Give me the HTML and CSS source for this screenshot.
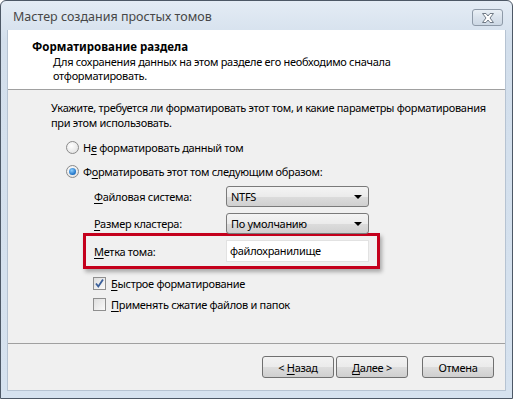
FILE: index.html
```html
<!DOCTYPE html>
<html lang="ru">
<head>
    <meta charset="UTF-8">
    <title>Мастер создания простых томов</title>
    <link rel="stylesheet" href="styles.css">
</head>
<body>
    <div class="window">
        <div class="titlebar">
            <span class="title">Мастер создания простых томов</span>
            <button class="close-btn" aria-label="Закрыть">
                <svg width="16" height="10" viewBox="0 0 16 10">
                    <path d="M2.5 0.5 H6 L8 3 L10 0.5 H13.5 L10 5 L13.5 9.5 H10 L8 7 L6 9.5 H2.5 L6 5 Z" fill="#fff" stroke="#707a86" stroke-width="1"/>
                </svg>
            </button>
        </div>
        <div class="client">
            <div class="header">
                <div class="header-title">Форматирование раздела</div>
                <div class="header-sub">Для сохранения данных на этом разделе его необходимо сначала<br>отформатировать.</div>
            </div>
            <div class="content">
                <p class="intro">Укажите, требуется ли форматировать этот том, и какие параметры форматирования<br>при этом использовать.</p>
                <label class="radio-row"><span class="radio"></span><span>Н<u>е</u> форматировать данный том</span></label>
                <label class="radio-row"><span class="radio checked"></span><span>Ф<u>о</u>рматировать этот том следующим образом:</span></label>
                <div class="options">
                    <div class="field">
                        <span class="field-label"><u>Ф</u>айловая система:</span>
                        <div class="combo"><span>NTFS</span><span class="arrow"></span></div>
                    </div>
                    <div class="field">
                        <span class="field-label"><u>Р</u>азмер кластера:</span>
                        <div class="combo"><span>По умолчанию</span><span class="arrow"></span></div>
                    </div>
                    <div class="field highlight">
                        <span class="field-label"><u>М</u>етка тома:</span>
                        <div class="textbox">файлохранилище</div>
                    </div>
                    <label class="check-row"><span class="checkbox checked">
                        <svg width="11" height="11" viewBox="0 0 11 11"><path d="M2 5.5 L4.3 8.5 L9 1.5" fill="none" stroke="#3a5f9a" stroke-width="1.8"/></svg>
                    </span><span><u>Б</u>ыстрое форматирование</span></label>
                    <label class="check-row"><span class="checkbox"></span><span><u>П</u>рименять сжатие файлов и папок</span></label>
                </div>
            </div>
            <div class="footer">
                <button class="btn">&lt; <u>Н</u>азад</button>
                <button class="btn"><u>Д</u>алее &gt;</button>
                <button class="btn btn-cancel">Отмена</button>
            </div>
        </div>
    </div>
</body>
</html>
```

FILE: styles.css
```css
body { margin: 0; font-family: "Noto Sans", "Open Sans", sans-serif; font-size: 11px; letter-spacing: -0.3px; color: #000; }
u { text-decoration: underline; text-underline-offset: 2px; }

.window { width: 513px; height: 399px; box-sizing: border-box; border: 1px solid #4d5866; border-radius: 6px 6px 0 0; background: linear-gradient(#e4ecf5, #d3dfec 40px, #d6e2ef); padding: 0 7px 7px; display: flex; flex-direction: column; }

.titlebar { height: 29px; display: flex; align-items: center; justify-content: space-between; padding: 0 2px 0 5px; }
.title { font-size: 12.5px; letter-spacing: 0; color: #474747; padding-top: 2px; }
.close-btn { width: 31px; height: 17px; margin-top: 4px; padding: 0; border: 1px solid #8e9aa8; border-radius: 3px; background: linear-gradient(#eaf0f6, #d9e2ec 50%, #cdd8e4); display: flex; align-items: center; justify-content: center; }

.client { flex: 1; display: flex; flex-direction: column; background: #f0f0f0; border: 1px solid #b6c3d2; border-top: none; margin: 0 -1px; }

.header { background: #fff; border-bottom: 1px solid #a0a0a0; padding: 9px 0 0 24px; box-sizing: border-box; height: 60px; }
.header-title { font-weight: bold; font-size: 11.5px; letter-spacing: 0; line-height: 16px; }
.header-sub { margin-left: 21px; line-height: 14px; }

.content { flex: 1; padding: 10px 0 0 43px; white-space: nowrap; }
.intro { margin: 0 0 5px; line-height: 15px; }

.radio-row { display: flex; align-items: center; height: 24px; margin-left: 15px; }
.radio { width: 11px; height: 11px; border: 1px solid #8a8a8a; border-radius: 50%; background: radial-gradient(circle at 40% 35%, #fff, #dcdcdc); margin-right: 4px; position: relative; }
.radio.checked::after { content: ""; position: absolute; left: 2px; top: 2px; width: 7px; height: 7px; border-radius: 50%; background: radial-gradient(circle at 40% 35%, #8fd0ff, #1b6fc4 70%, #0d4a8c); }

.options { margin-left: 43px; }
.field { display: flex; align-items: center; height: 27px; width: max-content; }
.field-label { width: 132px; }
.combo { width: 143px; height: 21px; box-sizing: border-box; border: 1px solid #7a7a7a; border-radius: 3px; background: linear-gradient(#f4f4f4, #ebebeb 50%, #dcdcdc 51%, #d0d0d0); padding: 0 0 0 4px; display: flex; align-items: center; justify-content: space-between; }
.arrow { width: 0; height: 0; border-left: 4px solid transparent; border-right: 4px solid transparent; border-top: 4px solid #000; margin-right: 6px; }
.textbox { width: 143px; height: 22px; box-sizing: border-box; background: #fff; border: 1px solid #e2e2e2; padding: 2px 0 0 3px; line-height: 16px; }

.highlight { border: 3px solid #c4001c; margin: -4px -11px 4px -11px; padding: 4px 8px; height: 22px; box-shadow: 2px 3px 4px rgba(0,0,0,0.3); }

.check-row { display: flex; align-items: center; height: 21px; margin-left: -1px; }
.checkbox { width: 11px; height: 11px; border: 1px solid #8f8f8f; background: linear-gradient(135deg, #dedede, #fafafa); margin-right: 5px; display: flex; align-items: center; justify-content: center; }

.footer { border-top: 1px solid #a0a0a0; display: flex; align-items: flex-start; justify-content: flex-end; padding: 12px 11px 0 0; box-sizing: border-box; height: 47px; }
.btn { width: 72px; height: 22px; font-family: inherit; font-size: 11px; letter-spacing: -0.3px; border: 1px solid #707070; border-radius: 3px; background: linear-gradient(#f2f2f2, #ebebeb 50%, #dddddd 51%, #cfcfcf); padding: 0; margin-left: 2px; color: #000; }
.btn-cancel { margin-left: 14px; }
```
